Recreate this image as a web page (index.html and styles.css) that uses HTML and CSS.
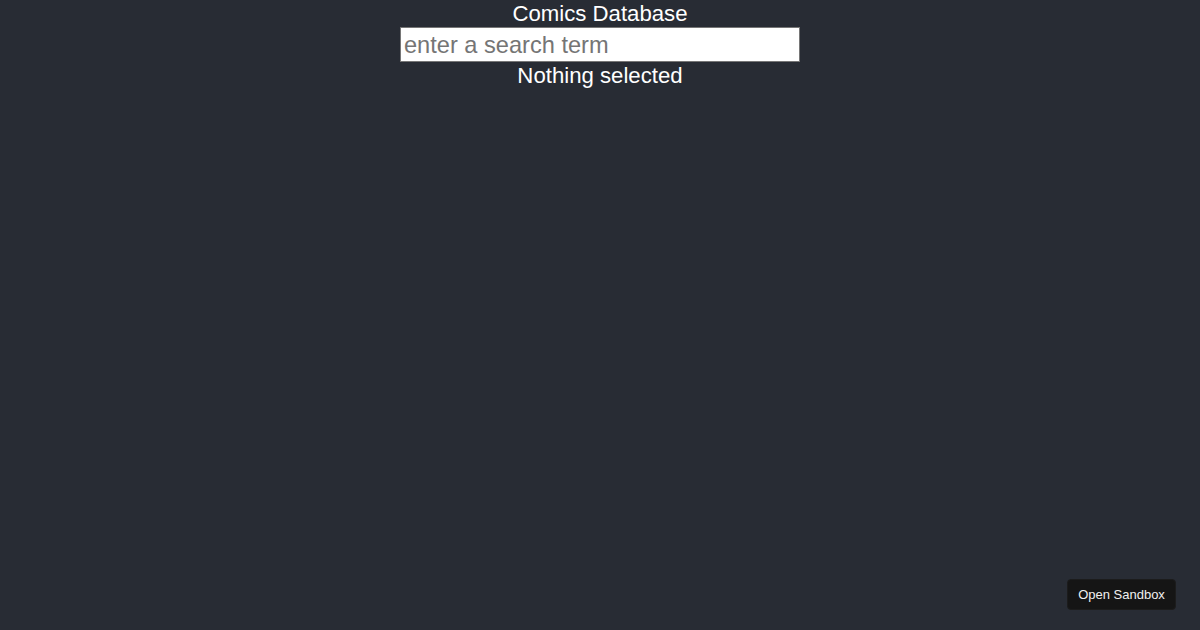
FILE: index.html
```html
<!DOCTYPE html>
<html lang="en">
<head>
  <meta charset="UTF-8" />
  <title>Comics Database</title>
  <link rel="stylesheet" href="styles.css">
</head>
<body>
  <div class="app">
    <div class="title">Comics Database</div>
    <input class="search" type="text" placeholder="enter a search term">
    <div class="selected">Nothing selected</div>
  </div>

  <button class="sandbox">Open Sandbox</button>
</body>
</html>
```

FILE: styles.css
```css
* { box-sizing: border-box; }
body {
  margin: 0;
  background: #282c34;
  color: white;
  font-family: 'Liberation Sans', Arial, sans-serif;
  height: 630px;
  overflow: hidden;
}
.app {
  display: flex;
  flex-direction: column;
  align-items: center;
  font-size: 22.2px;
}
.title {
  line-height: 27px;
}
.search {
  width: 400px;
  height: 35px;
  padding: 3px 3px 2px;
  font-family: inherit;
  font-size: 23.6px;
  border: 1px solid #767676;
  background: white;
  color: #000;
}
.search::placeholder {
  color: #757575;
}
.selected {
  line-height: 28px;
}
.sandbox {
  position: fixed;
  right: 24px;
  bottom: 20px;
  width: 109px;
  height: 31px;
  background: #151515;
  color: #f0f0f0;
  border: 1px solid #1c1c1c;
  border-radius: 4px;
  font-family: 'Liberation Sans', Arial, sans-serif;
  font-size: 13px;
  padding: 0;
}
```
